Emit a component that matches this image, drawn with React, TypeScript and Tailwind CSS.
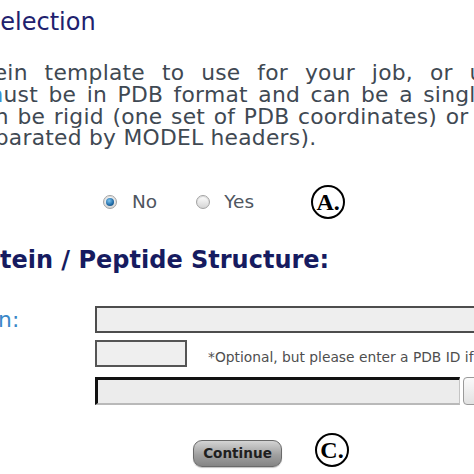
import React from "react";

const Radio = ({ checked = false }: { checked?: boolean }) => (
  <span className="flex h-[14px] w-[14px] shrink-0 items-center justify-center rounded-full border border-[#a3a3a3] bg-[linear-gradient(180deg,#ffffff,#d4d4d4)] shadow-[inset_0_1px_1px_rgba(0,0,0,0.15)]">
    {checked && (
      <span className="h-[8px] w-[8px] rounded-full bg-[radial-gradient(circle_at_40%_35%,#7cc4f0,#1f6aa6_60%,#123f66)]" />
    )}
  </span>
);

const Marker = ({ label }: { label: string }) => (
  <span className="flex h-[34px] w-[34px] shrink-0 items-center justify-center rounded-full border-2 border-black font-['Liberation_Serif',serif] text-[24px] font-bold leading-none text-black">
    {label}
  </span>
);

export default function App() {
  return (
    <div className="relative h-[474px] w-[474px] overflow-hidden bg-white font-['DejaVu_Sans',sans-serif]">
      {/* section title, cut at the left edge */}
      <h1 className="ml-[-15px] whitespace-nowrap pt-[8px] text-[24px] leading-[28px] font-normal text-[#20216e]">
        Selection
      </h1>

      <div className="mt-[26px] text-[21.8px] leading-[21.8px] tracking-[0.25px] text-[#3f4953]">
        <div className="ml-[-51.5px] whitespace-nowrap [word-spacing:9.7px]">
          protein template to use for your job, or upload
        </div>
        <div className="ml-[-18px] whitespace-nowrap [word-spacing:3.3px]">
          <span className="text-[#3a8fd2]">m</span>ust be in PDB format and can be a single
        </div>
        <div className="ml-[-31px] whitespace-nowrap [word-spacing:1.4px]">
          can be rigid (one set of PDB coordinates) or flexible
        </div>
        <div className="ml-[-30.5px] whitespace-nowrap">separated by MODEL headers).</div>
      </div>

      <div className="mt-[36px] flex h-[34px] items-center pl-[103px] text-[18.5px] text-[#4f5660]">
        <Radio checked />
        <span className="ml-[15px]">No</span>
        <span className="ml-[39px]">
          <Radio />
        </span>
        <span className="ml-[14px]">Yes</span>
        <span className="ml-[57px]">
          <Marker label="A." />
        </span>
      </div>

      <h2 className="ml-[-46px] mt-[27px] whitespace-nowrap text-[24px] leading-[28px] font-bold text-[#161b60]">
        Protein / Peptide Structure:
      </h2>

      <div className="mt-[32px]">
        <div className="flex h-[27px] items-center">
          <div className="w-[95px] shrink-0 text-[21.8px] leading-[27px] text-[#3a88c8]">
            <span className="ml-[-64.5px] whitespace-nowrap">Protein:</span>
          </div>
          <div className="h-[27px] w-[400px] shrink-0 border-2 border-[#4d4d4d] bg-[#eeeeee]" />
        </div>

        <div className="mt-[7px] flex items-start">
          <div className="ml-[95px] h-[27px] w-[92px] shrink-0 border-2 border-[#555555] bg-[#efefef]" />
          <span className="ml-[21px] mt-[7px] whitespace-nowrap text-[13.8px] leading-[20px] text-[#4e4e4e]">
            *Optional, but please enter a PDB ID if available
          </span>
        </div>

        <div className="mt-[10px] flex h-[28px] items-stretch">
          <div className="ml-[95px] w-[365px] shrink-0 border-t-[3px] border-l-[3px] border-r border-b-2 border-t-[#111111] border-l-[#111111] border-r-[#c4c4c4] border-b-[#b9b9b9] bg-[#ececec]" />
          <div className="ml-[3px] w-[60px] shrink-0 rounded-[4px] border border-[#9a9a9a] bg-[linear-gradient(180deg,#fafafa,#e2e2e2)]" />
        </div>
      </div>

      <div className="mt-[28px] flex items-start pl-[193px]">
        <button className="mt-[7px] flex h-[27px] w-[89px] items-center justify-center rounded-[9px] border border-[#6a6a6a] bg-[linear-gradient(180deg,#d4d4d4,#a0a0a0_55%,#858585)] text-[13.6px] font-bold text-[#1e1e1e] shadow-[0_1px_1px_rgba(0,0,0,0.25)]">
          Continue
        </button>
        <span className="ml-[33px]">
          <Marker label="C." />
        </span>
      </div>
    </div>
  );
}
